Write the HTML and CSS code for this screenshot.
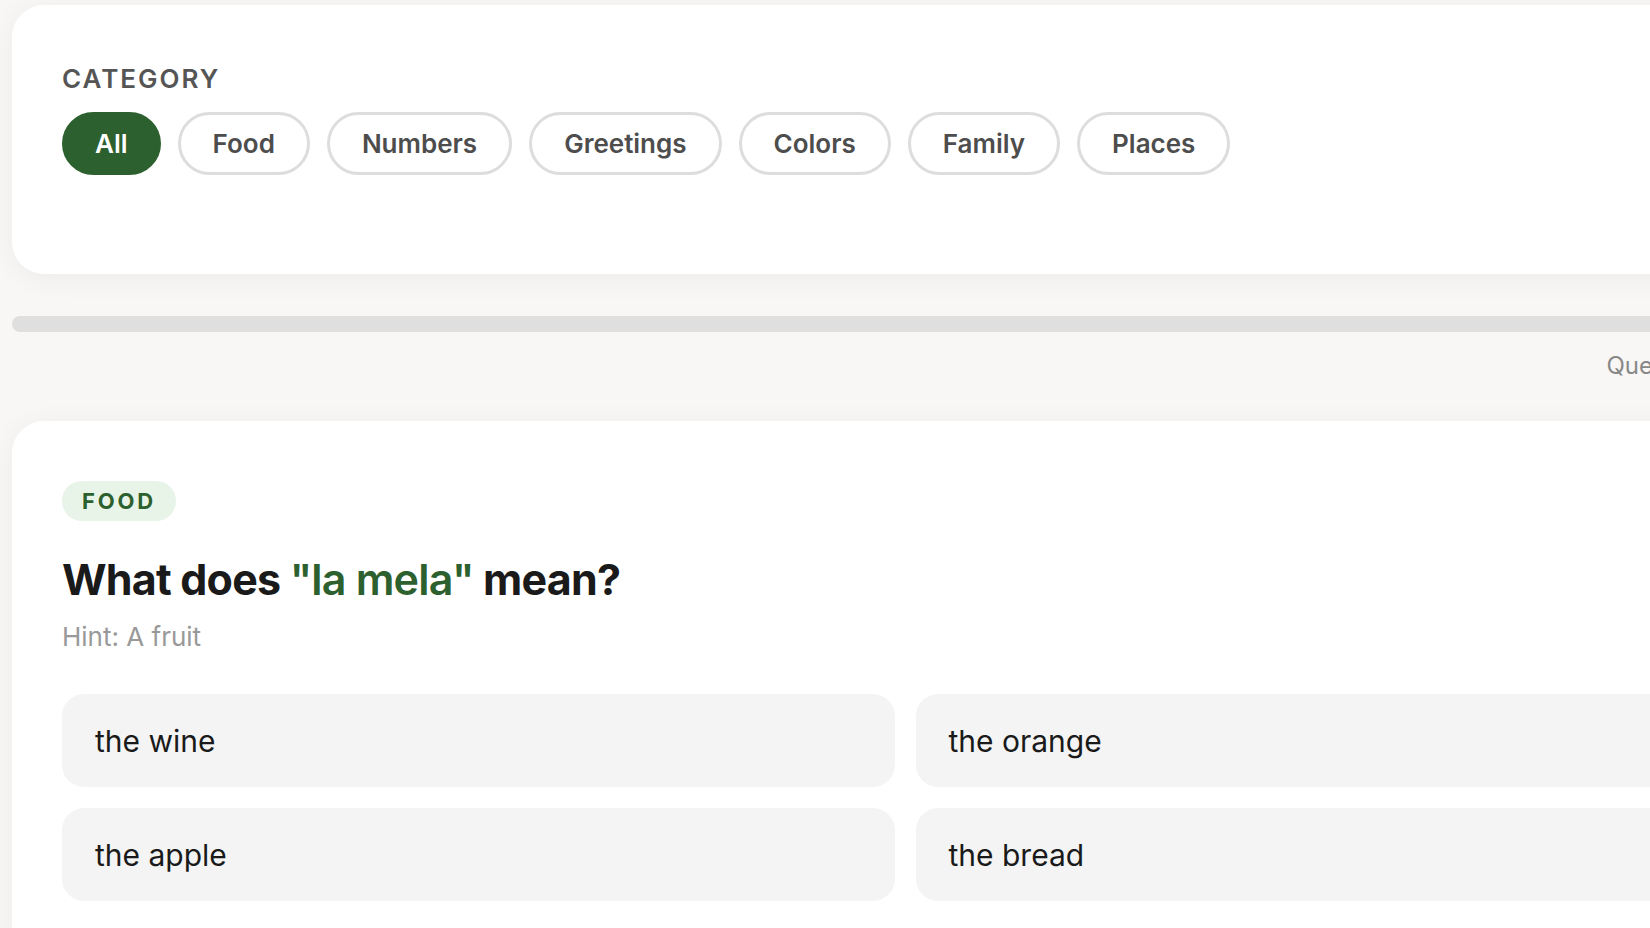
FILE: index.html
```html
<!DOCTYPE html>
<html lang="en">
<head>
    <meta charset="utf-8">
    <title>Italian Vocabulary Quiz</title>
    <link rel="stylesheet" href="styles.css">
</head>
<body>
    <div class="quiz-container">
        <div class="card filter-card">
            <p class="section-label">Category</p>
            <div class="filters">
                <button class="pill active">All</button>
                <button class="pill">Food</button>
                <button class="pill">Numbers</button>
                <button class="pill">Greetings</button>
                <button class="pill">Colors</button>
                <button class="pill">Family</button>
                <button class="pill">Places</button>
            </div>
        </div>

        <div class="progress">
            <div class="progress-fill" style="width: 0%;"></div>
        </div>
        <p class="progress-text">Question 1 of 10</p>

        <div class="card question-card">
            <span class="badge">Food</span>
            <h2 class="question">What does <span class="word">"la mela"</span> mean?</h2>
            <p class="hint">Hint: A fruit</p>
            <div class="options">
                <button class="option">the wine</button>
                <button class="option">the orange</button>
                <button class="option">the apple</button>
                <button class="option">the bread</button>
            </div>
        </div>
    </div>
</body>
</html>
```

FILE: styles.css
```css
html, body {
    overflow: hidden;
}

body {
    margin: 0;
    background-color: #f8f7f5;
    font-family: 'Inter', 'Noto Sans', sans-serif;
    color: #1a1a1a;
}

.quiz-container {
    width: 1786px;
    padding: 5px 0 0 12px;
}

.card {
    background-color: white;
    border-radius: 32px;
    padding: 60px 50px;
    box-shadow: 0 4px 28px rgba(0,0,0,0.05);
}

.section-label {
    margin: 0 0 19px;
    font-size: 26px;
    line-height: 28px;
    font-weight: 600;
    letter-spacing: 2px;
    text-transform: uppercase;
    color: #555;
}

.filters {
    display: flex;
    gap: 17px;
    margin-bottom: 39px;
}

.pill {
    font-family: inherit;
    font-size: 26px;
    line-height: 31px;
    font-weight: 600;
    color: #4d4d4d;
    background-color: white;
    border: 3px solid #ddd;
    border-radius: 999px;
    padding: 13px 32px;
    cursor: pointer;
}

.pill.active {
    padding: 13px 30px;
    background-color: #2c602e;
    border-color: #2c602e;
    color: white;
}

.progress {
    margin-top: 42px;
    height: 16px;
    border-radius: 8px;
    background-color: #dfdfdf;
    overflow: hidden;
}

.progress-fill {
    height: 100%;
    background-color: #2c602e;
}

.progress-text {
    margin: 18px 0 39px;
    padding-right: 12px;
    text-align: right;
    font-size: 24px;
    line-height: 32px;
    color: #888;
}

.badge {
    display: inline-block;
    background-color: #e8f4e8;
    color: #2c602e;
    font-size: 22px;
    line-height: 28px;
    font-weight: 700;
    letter-spacing: 2.8px;
    text-transform: uppercase;
    padding: 6px 20px;
    border-radius: 20px;
}

.question {
    margin: 30px 0 11px;
    font-size: 43px;
    line-height: 57px;
    font-weight: 700;
    letter-spacing: -0.8px;
}

.question .word {
    color: #2c602e;
    font-weight: 600;
}

.hint {
    margin: 0 0 39px;
    font-size: 26px;
    line-height: 36px;
    color: #999;
}

.options {
    display: grid;
    grid-template-columns: 1fr 1fr;
    gap: 21px;
}

.option {
    display: flex;
    align-items: center;
    height: 93px;
    padding: 0 33px;
    font-family: inherit;
    font-size: 30px;
    color: #1a1a1a;
    text-align: left;
    background-color: #f4f4f4;
    border: none;
    border-radius: 22px;
    cursor: pointer;
}
```
